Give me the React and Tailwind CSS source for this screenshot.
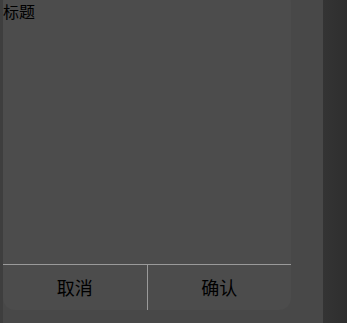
export default function App() {
  return (
    <div
      className="flex h-[323px] w-[347px] overflow-hidden bg-[#484848]"
      style={{ fontFamily: '"Noto Sans CJK SC", "Noto Sans", sans-serif' }}
    >
      <div className="w-[3px] shrink-0 bg-[#3e3e3e]" />
      <div className="flex w-[320px] shrink-0 items-start bg-[#484848]">
        <div className="-mt-[10px] flex h-[320px] w-[288px] flex-col rounded-[12px] bg-[#4c4c4c]">
          <div className="flex-1 pt-[10px]">
            <p className="text-[16px] leading-[22px] text-black">标题</p>
          </div>
          <div className="flex h-[46px] border-t border-[#9a9a9a]">
            <button className="flex flex-1 items-center justify-center border-r border-[#9a9a9a] text-[18px] text-black">
              取消
            </button>
            <button className="flex flex-1 items-center justify-center text-[18px] text-black">
              确认
            </button>
          </div>
        </div>
      </div>
      <div className="flex-1 bg-gradient-to-r from-[#343434] to-[#2e2e2e]" />
    </div>
  );
}
